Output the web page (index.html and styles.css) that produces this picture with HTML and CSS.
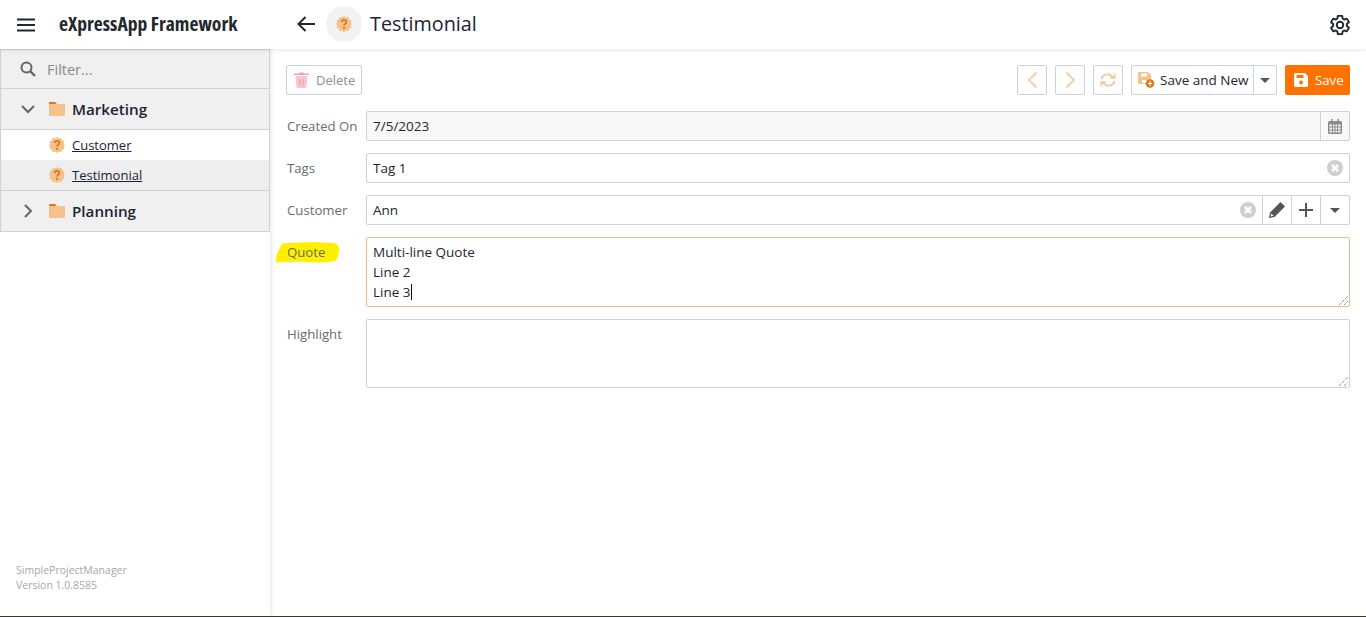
FILE: index.html
```html
<!DOCTYPE html>
<html lang="en">
<head>
<meta charset="utf-8">
<title>Testimonial</title>
<link rel="stylesheet" href="styles.css">
</head>
<body>
<svg class="defs" width="0" height="0">
  <symbol id="badge" viewBox="0 0 16 16">
    <path fill="#f6c28b" d="M8 0l2 1.300 2.400-.2.9 2.200 2.100 1.200-.5 2.300L16 8l-1.100 1.200.5 2.300-2.100 1.200-.9 2.200-2.400-.2L8 16l-2-1.300-2.400.2-.9-2.200-2.100-1.200.5-2.300L0 8l1.100-1.200-.5-2.300 2.100-1.200.9-2.200 2.400.2z"/>
    <path fill="none" stroke="#d9771a" stroke-width="1.800" d="M5.700 6.100c0-3 4.700-3 4.700-.2 0 1.900-2.300 1.900-2.300 3.700"/>
    <rect x="7.100" y="10.800" width="2" height="2" fill="#d9771a"/>
  </symbol>
  <symbol id="folder" viewBox="0 0 16 14">
    <path fill="#f6c28b" d="M0 2h16v11a1 1 0 0 1-1 1H1a1 1 0 0 1-1-1z"/>
    <path fill="#d9771a" d="M0 1a1 1 0 0 1 1-1h5l2 2H0z"/>
  </symbol>
  <symbol id="grip" viewBox="0 0 9 9">
    <path stroke="#666" stroke-dasharray="1 1" fill="none" d="M0 9L9 0M5 9L9 5"/>
  </symbol>
</svg>

<header class="topbar">
  <div class="brand">
    <button class="icon-plain" aria-label="Menu">
      <svg width="18" height="14" viewBox="0 0 18 14"><path stroke="#23272d" stroke-width="2" d="M0 1.500h18M0 7h18M0 12.500h18"/></svg>
    </button>
    <span class="brand-name">eXpressApp Framework</span>
  </div>
  <div class="title-area">
    <button class="icon-plain back" aria-label="Back">
      <svg width="18" height="16" viewBox="0 0 18 16"><path fill="none" stroke="#23272d" stroke-width="2" d="M18 8H2M8.500 1L1.500 8l7 7"/></svg>
    </button>
    <span class="title-badge"><svg width="16" height="16"><use href="#badge"/></svg></span>
    <h1 class="title">Testimonial</h1>
  </div>
  <button class="icon-plain" aria-label="Settings">
    <svg width="20" height="20" viewBox="1.500 1.500 21 21"><path fill="none" stroke="#23272d" stroke-width="2" stroke-linejoin="round" d="M19.140 12.940c.04-.3.06-.61.06-.94 0-.32-.02-.64-.07-.94l2.030-1.580c.18-.14.23-.41.12-.61l-1.920-3.320c-.12-.22-.37-.29-.59-.22l-2.390.96c-.5-.38-1.030-.7-1.620-.94l-.36-2.540c-.04-.24-.24-.41-.48-.41h-3.840c-.24 0-.43.17-.47.41l-.36 2.540c-.59.24-1.130.57-1.620.94l-2.390-.96c-.22-.08-.47 0-.59.22L2.740 8.870c-.12.21-.08.47.12.61l2.030 1.580c-.05.3-.09.63-.09.94s.02.64.07.94l-2.030 1.580c-.18.14-.23.41-.12.61l1.920 3.320c.12.22.37.29.59.22l2.390-.96c.5.38 1.030.7 1.620.94l.36 2.540c.05.24.24.41.48.41h3.840c.24 0 .44-.17.47-.41l.36-2.540c.59-.24 1.130-.56 1.620-.94l2.390.96c.22.08.47 0 .59-.22l1.920-3.320c.12-.22.07-.47-.12-.61z"/><circle cx="12" cy="12" r="3.400" fill="none" stroke="#23272d" stroke-width="2"/></svg>
  </button>
</header>

<div class="body">
  <aside class="sidebar">
    <nav class="nav">
      <div class="nav-row filter">
        <svg width="16" height="16" viewBox="0 0 16 16"><circle cx="6.500" cy="6.500" r="5" fill="none" stroke="#666" stroke-width="2"/><path stroke="#666" stroke-width="2.400" d="M10 10l5 5"/></svg>
        <span>Filter...</span>
      </div>
      <div class="nav-row group">
        <svg class="chev" width="14" height="14" viewBox="0 0 14 14"><path fill="none" stroke="#666" stroke-width="2" d="M1 4l6 6 6-6"/></svg>
        <svg class="fold" width="16" height="14"><use href="#folder"/></svg>
        <span>Marketing</span>
      </div>
      <a class="nav-item" href="#"><svg width="16" height="16"><use href="#badge"/></svg><span>Customer</span></a>
      <a class="nav-item current" href="#"><svg width="16" height="16"><use href="#badge"/></svg><span>Testimonial</span></a>
      <div class="nav-row group">
        <svg class="chev" width="14" height="14" viewBox="0 0 14 14"><path fill="none" stroke="#666" stroke-width="2" d="M4 1l6 6-6 6"/></svg>
        <svg class="fold" width="16" height="14"><use href="#folder"/></svg>
        <span>Planning</span>
      </div>
    </nav>
    <footer class="about">SimpleProjectManager<br>Version 1.0.8585</footer>
  </aside>

  <main class="main">
    <div class="toolbar">
      <button class="btn disabled">
        <svg width="15" height="16" viewBox="0 0 15 16"><path fill="#f5c6cb" d="M1.500 4h12l-1 11a1 1 0 0 1-1 1h-8a1 1 0 0 1-1-1z"/><path fill="#eca3ab" d="M0 1.500h5l.5-1h4l.5 1h5V3H0z"/><path stroke="#eca3ab" stroke-width="1.200" d="M5.800 7v6M9.200 7v6"/></svg>
        <span>Delete</span>
      </button>
      <div class="spacer"></div>
      <button class="btn square" aria-label="Previous"><svg width="11" height="18" viewBox="0 0 11 18"><path fill="none" stroke="#f3cfa9" stroke-width="2" d="M9.500 1.500L2 9l7.500 7.500"/></svg></button>
      <button class="btn square" aria-label="Next"><svg width="11" height="18" viewBox="0 0 11 18"><path fill="none" stroke="#f3cfa9" stroke-width="2" d="M1.500 1.500L9 9l-7.500 7.500"/></svg></button>
      <button class="btn square" aria-label="Refresh"><svg width="16" height="16" viewBox="0 0 16 16"><path fill="none" stroke="#f3cfa9" stroke-width="2.200" d="M1.500 7C2 3.500 6 1 10 3l3 2.500M14.500 9c-.5 3.500-4.500 6-8.500 4L3 10.500"/><path fill="#f3cfa9" d="M15.500 1v6h-6zM.5 15V9h6z"/></svg></button>
      <div class="split">
        <button class="btn-part main-part">
          <svg width="17" height="16" viewBox="0 0 17 16"><path fill="#f6c28b" d="M0 1a1 1 0 0 1 1-1h9l3 3v9H1a1 1 0 0 1-1-1z"/><path fill="#fff" d="M3 1.500h6v3H3zM4 8h5v3H4z"/><circle cx="12" cy="11.500" r="4.300" fill="#d9771a"/><path stroke="#fff" stroke-width="1.200" d="M9.800 11.500h4.400M12 9.300v4.400"/></svg>
          <span>Save and New</span>
        </button>
        <button class="btn-part arrow" aria-label="More"><span class="caret"></span></button>
      </div>
      <button class="btn primary">
        <svg width="14" height="14" viewBox="0 0 14 14"><path fill="#fff" d="M1.500 0H11l3 3v9.500a1.500 1.500 0 0 1-1.500 1.500h-11A1.500 1.500 0 0 1 0 12.500v-11A1.500 1.500 0 0 1 1.500 0z"/><path fill="#ff7200" d="M2.500 2h7v3h-7z"/><circle cx="7" cy="9.500" r="2" fill="#ff7200"/></svg>
        <span>Save</span>
      </button>
    </div>

    <form class="form">
      <label class="lbl">Created On</label>
      <div class="input readonly">
        <span class="val">7/5/2023</span>
        <span class="addon cal"><svg width="14" height="15" viewBox="0 0 14 15"><path fill="#8c8c8c" d="M3 0h1.500v2h5V0H11v2h1.500A1.500 1.500 0 0 1 14 3.500v10a1.500 1.500 0 0 1-1.500 1.500h-11A1.500 1.500 0 0 1 0 13.500v-10A1.500 1.500 0 0 1 1.500 2H3z"/><path fill="#f7f7f7" d="M1.500 5.500h2.500v2H1.500zM5 5.500h1.500v2H5zM7.500 5.500h1.500v2H7.500zM10 5.500h2.500v2H10zM1.500 8.500h2.500v2H1.500zM5 8.500h1.500v2H5zM7.500 8.500h1.500v2H7.500zM10 8.500h2.500v2H10zM1.500 11.500h2.500v2H1.500zM5 11.500h1.500v2H5zM7.500 11.500h1.500v2H7.500zM10 11.500h2.500v2H10z"/></svg></span>
      </div>

      <label class="lbl">Tags</label>
      <div class="input">
        <span class="val">Tag 1</span>
        <span class="clear"><svg width="16" height="16" viewBox="0 0 16 16"><circle cx="8" cy="8" r="8" fill="#cfcfcf"/><path stroke="#fff" stroke-width="2.600" d="M5 5l6 6M11 5l-6 6"/></svg></span>
      </div>

      <label class="lbl">Customer</label>
      <div class="input">
        <span class="val">Ann</span>
        <span class="clear"><svg width="16" height="16" viewBox="0 0 16 16"><circle cx="8" cy="8" r="8" fill="#cfcfcf"/><path stroke="#fff" stroke-width="2.600" d="M5 5l6 6M11 5l-6 6"/></svg></span>
        <span class="addon"><svg width="16" height="16" viewBox="0 0 16 16"><path fill="#555" d="M0 16l1-5.500L11.500 0 16 4.500 5.500 15zM1.500 14.500l3-.8-2.200-2.200z"/></svg></span>
        <span class="addon"><svg width="14" height="14" viewBox="0 0 14 14"><path stroke="#555" stroke-width="2" d="M7 0v14M0 7h14"/></svg></span>
        <span class="addon"><span class="caret"></span></span>
      </div>

      <label class="lbl quote-lbl">
        <svg class="marker" width="65" height="22" viewBox="0 0 64 22"><path fill="#fff000" d="M7 1.500C18 .5 40-.5 58 1c3 .5 6 3 5.500 8-.5 4-1.500 8-4 10-10 2-26 1.500-36 .5C15 19.500 5 21 .5 20 0 15 3.500 6 7 1.500z"/></svg>
        <span class="quote-text">Quote</span>
      </label>
      <div class="area focused">Multi-line Quote<br>Line 2<br>Line 3<span class="text-caret"></span><svg class="grip" width="9" height="9"><use href="#grip"/></svg></div>

      <label class="lbl">Highlight</label>
      <div class="area tall"><svg class="grip" width="9" height="9"><use href="#grip"/></svg></div>
    </form>
  </main>
</div>
</body>
</html>
```
FILE: styles.css
```css
* { box-sizing: border-box; }
html, body { height: 100%; }
body {
  margin: 0;
  height: 617px;
  overflow: hidden;
  display: flex;
  flex-direction: column;
  background: #fff;
  border-bottom: 1px solid #3a3632;
  font-family: "Open Sans", "Noto Sans", sans-serif;
  font-size: 13.5px;
  color: #23272d;
}
.defs { position: absolute; }
button { font: inherit; color: inherit; background: none; padding: 0; }
svg { display: block; flex: none; }

.topbar {
  height: 49px;
  flex: none;
  display: flex;
  align-items: center;
  justify-content: space-between;
  padding: 0 16px 0 17px;
  position: relative;
  z-index: 2;
  box-shadow: 0 1px 4px rgba(0, 0, 0, .1);
  background: #fff;
}
.icon-plain { border: 0; display: flex; align-items: center; justify-content: center; }
.brand { display: flex; align-items: center; width: 280px; }
.brand-name {
  margin-left: 24px;
  padding-bottom: 2px;
  font-size: 19.600px;
  font-weight: 700;
  font-stretch: 75%;
  white-space: nowrap;
}
.title-area { flex: 1; display: flex; align-items: center; padding-bottom: 2px; }
.back { margin-right: 11px; }
.title-badge {
  width: 36px;
  height: 36px;
  border-radius: 50%;
  background: #f3f3f3;
  display: flex;
  align-items: center;
  justify-content: center;
  margin-right: 8px;
}
.title { margin: 0; font-size: 19.800px; font-weight: 400; color: #1d2230; }

.body { flex: 1; display: flex; min-height: 0; }
.sidebar {
  width: 270px;
  flex: none;
  display: flex;
  flex-direction: column;
  justify-content: space-between;
  box-shadow: 2px 0 4px rgba(0, 0, 0, .08);
  position: relative;
  z-index: 1;
}
.nav { border: 1px solid #ced1d6; border-width: 1px 1px 0; background: #f0f0f0; font-size: 14px; }
.nav-row { display: flex; align-items: center; border-bottom: 1px solid #ced1d6; }
.filter { height: 39px; padding-left: 19px; gap: 11px; color: #8a8a8a; font-size: 14.500px; }
.group { height: 41px; padding-left: 20px; font-size: 15.200px; font-weight: 600; color: #1d2230; }
.chev { margin-right: 14px; }
.fold { margin-right: 7px; }
.nav-item {
  display: flex;
  align-items: center;
  height: 30px;
  padding-left: 48px;
  gap: 7px;
  background: #fff;
  color: #1d2230;
  font-size: 13px;
}
.nav-item.current { background: #eeeeee; height: 31px; border-bottom: 1px solid #ced1d6; }
.about { padding: 0 16px 23px; font-size: 10.500px; line-height: 15px; color: #a8a8a8; }

.main { flex: 1; min-width: 0; padding: 16px 16px 0; }
.toolbar { display: flex; align-items: center; height: 30px; gap: 8px; }
.spacer { flex: 1; }
.btn {
  height: 30px;
  display: flex;
  align-items: center;
  border: 1px solid #ced1d6;
  border-radius: 2px;
  background: #fff;
}
.btn.square { width: 30px; justify-content: center; }
.btn.disabled { width: 76px; padding-left: 7px; gap: 7px; color: #8e8e8e; font-size: 13px; }
.split { display: flex; height: 30px; border: 1px solid #ced1d6; border-radius: 2px; }
.btn-part { border: 0; display: flex; align-items: center; }
.main-part { width: 121px; padding-left: 6px; gap: 5px; }
.arrow { width: 23px; border-left: 1px solid #ced1d6; justify-content: center; }
.caret { width: 0; height: 0; display: block; border: 5px solid transparent; border-top: 5px solid #555; border-bottom: 0; }
.btn.primary { width: 65px; padding-left: 8px; gap: 7px; background: #ff7200; border-color: #ff7200; color: #fff; font-size: 13.200px; }

.form {
  margin-top: 16px;
  display: grid;
  grid-template-columns: 80px 1fr;
  grid-auto-rows: min-content;
  row-gap: 12px;
}
.lbl { padding: 6px 0 0 1px; line-height: 19px; color: #6b6b6b; position: relative; font-size: 13.200px; }
.input {
  height: 30px;
  display: flex;
  align-items: center;
  border: 1px solid #ced1d6;
  border-radius: 2px;
}
.input.readonly { background: #f8f8f8; }
.val { flex: 1; padding-left: 6px; color: #23272d; }
.clear { padding-right: 6px; }
.addon {
  width: 29px;
  height: 28px;
  display: flex;
  align-items: center;
  justify-content: center;
  border-left: 1px solid #ced1d6;
}
.area {
  position: relative;
  height: 70px;
  padding: 4px 6px;
  line-height: 20px;
  border: 1px solid #ced1d6;
  border-radius: 2px;
}
.area.tall { height: 69px; }
.area.focused { border-color: #fdb87c; }
.grip { position: absolute; right: 1px; bottom: 1px; }
.text-caret { display: inline-block; width: 1px; height: 16px; background: #111; vertical-align: -3px; }
.quote-text { position: relative; }
.marker { position: absolute; left: -11px; top: 5px; }
```
